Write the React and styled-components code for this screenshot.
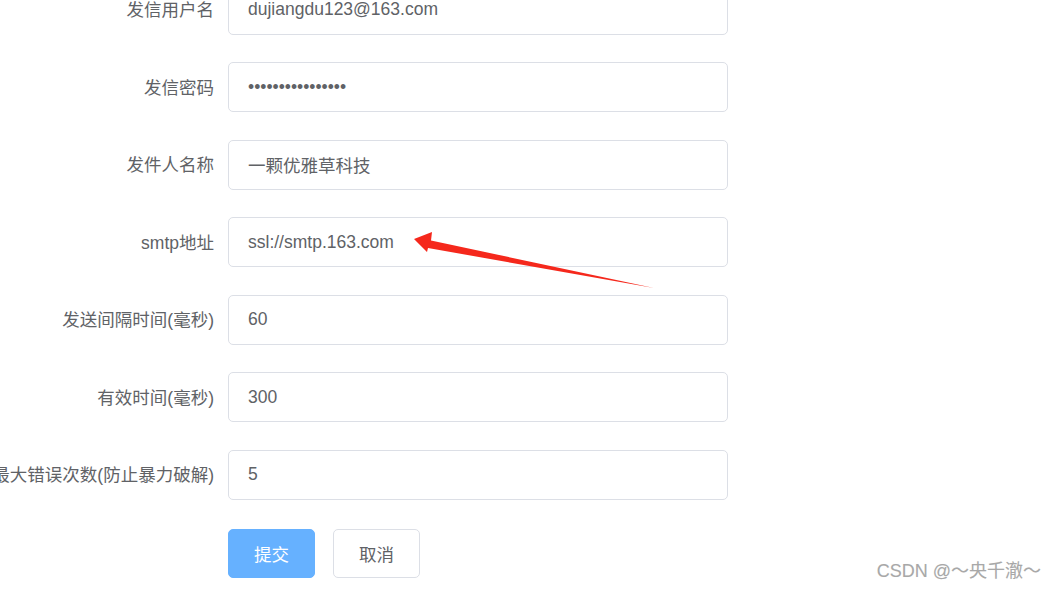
import React from "react";
import styled, { createGlobalStyle } from "styled-components";

const GlobalStyle = createGlobalStyle`
  html, body {
    margin: 0;
    padding: 0;
    background: #fff;
    overflow: hidden;
  }
  body {
    font-family: "Liberation Sans", "Noto Sans CJK SC", sans-serif;
  }
`;

const Page = styled.div`
  position: relative;
  width: 1056px;
  height: 590px;
  overflow: hidden;
`;

const Form = styled.form`
  margin-top: -15.5px;
  display: flex;
  flex-direction: column;
`;

const FormItem = styled.div`
  display: flex;
  align-items: center;
  height: 50px;
  margin-bottom: 27.5px;
`;

const Label = styled.label`
  flex: 0 0 228px;
  min-width: 0;
  box-sizing: border-box;
  padding-right: 14px;
  margin-top: -2px;
  text-align: right;
  white-space: nowrap;
  direction: rtl;
  font-size: 17.5px;
  color: #606266;
`;

const Input = styled.input`
  box-sizing: border-box;
  flex: 0 0 500px;
  width: 500px;
  height: 50px;
  padding: 0 19px;
  border: 1px solid #dcdfe6;
  border-radius: 5px;
  outline: none;
  background: #fff;
  font-family: "Liberation Sans", "Noto Sans CJK SC", sans-serif;
  font-size: 17.5px;
  color: #606266;
`;

const Actions = styled.div`
  display: flex;
  gap: 18px;
  padding-left: 228px;
  margin-top: 1.5px;
`;

const Button = styled.button`
  box-sizing: border-box;
  height: 49px;
  padding: 0 25px;
  border-radius: 5px;
  font-family: "Liberation Sans", "Noto Sans CJK SC", sans-serif;
  font-size: 17.5px;
  cursor: pointer;
  border: 1px solid ${(p) => (p.$primary ? "#66b1ff" : "#dcdfe6")};
  background: ${(p) => (p.$primary ? "#66b1ff" : "#fff")};
  color: ${(p) => (p.$primary ? "#fff" : "#606266")};
`;

const Arrow = styled.svg`
  position: absolute;
  left: 0;
  top: 0;
  pointer-events: none;
`;

const Watermark = styled.div`
  position: absolute;
  right: 15px;
  bottom: 8px;
  font-size: 18px;
  color: #a8a8a8;
  text-shadow: 0 0 1px rgba(0, 0, 0, 0.08);
  font-family: "Liberation Sans", "Noto Sans CJK SC", sans-serif;
`;

const fields = [
  { label: "发信用户名", value: "dujiangdu123@163.com" },
  { label: "发信密码", value: "••••••••••••••••" },
  { label: "发件人名称", value: "一颗优雅草科技" },
  { label: "smtp地址", value: "ssl://smtp.163.com" },
  { label: "发送间隔时间(毫秒)", value: "60" },
  { label: "有效时间(毫秒)", value: "300" },
  { label: "最大错误次数(防止暴力破解)", value: "5" },
];

export default function App() {
  return (
    <Page>
      <GlobalStyle />
      <Form onSubmit={(e) => e.preventDefault()}>
        {fields.map((f) => (
          <FormItem key={f.label}>
            <Label>
              <bdi>{f.label}</bdi>
            </Label>
            <Input readOnly value={f.value} />
          </FormItem>
        ))}
        <Actions>
          <Button type="button" $primary>提交</Button>
          <Button type="button">取消</Button>
        </Actions>
      </Form>
      <Arrow width="1056" height="590" viewBox="0 0 1056 590">
        <polygon
          points="414,239 432,232 431,240.5 654,288 428,248 427,252"
          fill="#f5281c"
        />
      </Arrow>
      <Watermark>CSDN @～央千澈～</Watermark>
    </Page>
  );
}
